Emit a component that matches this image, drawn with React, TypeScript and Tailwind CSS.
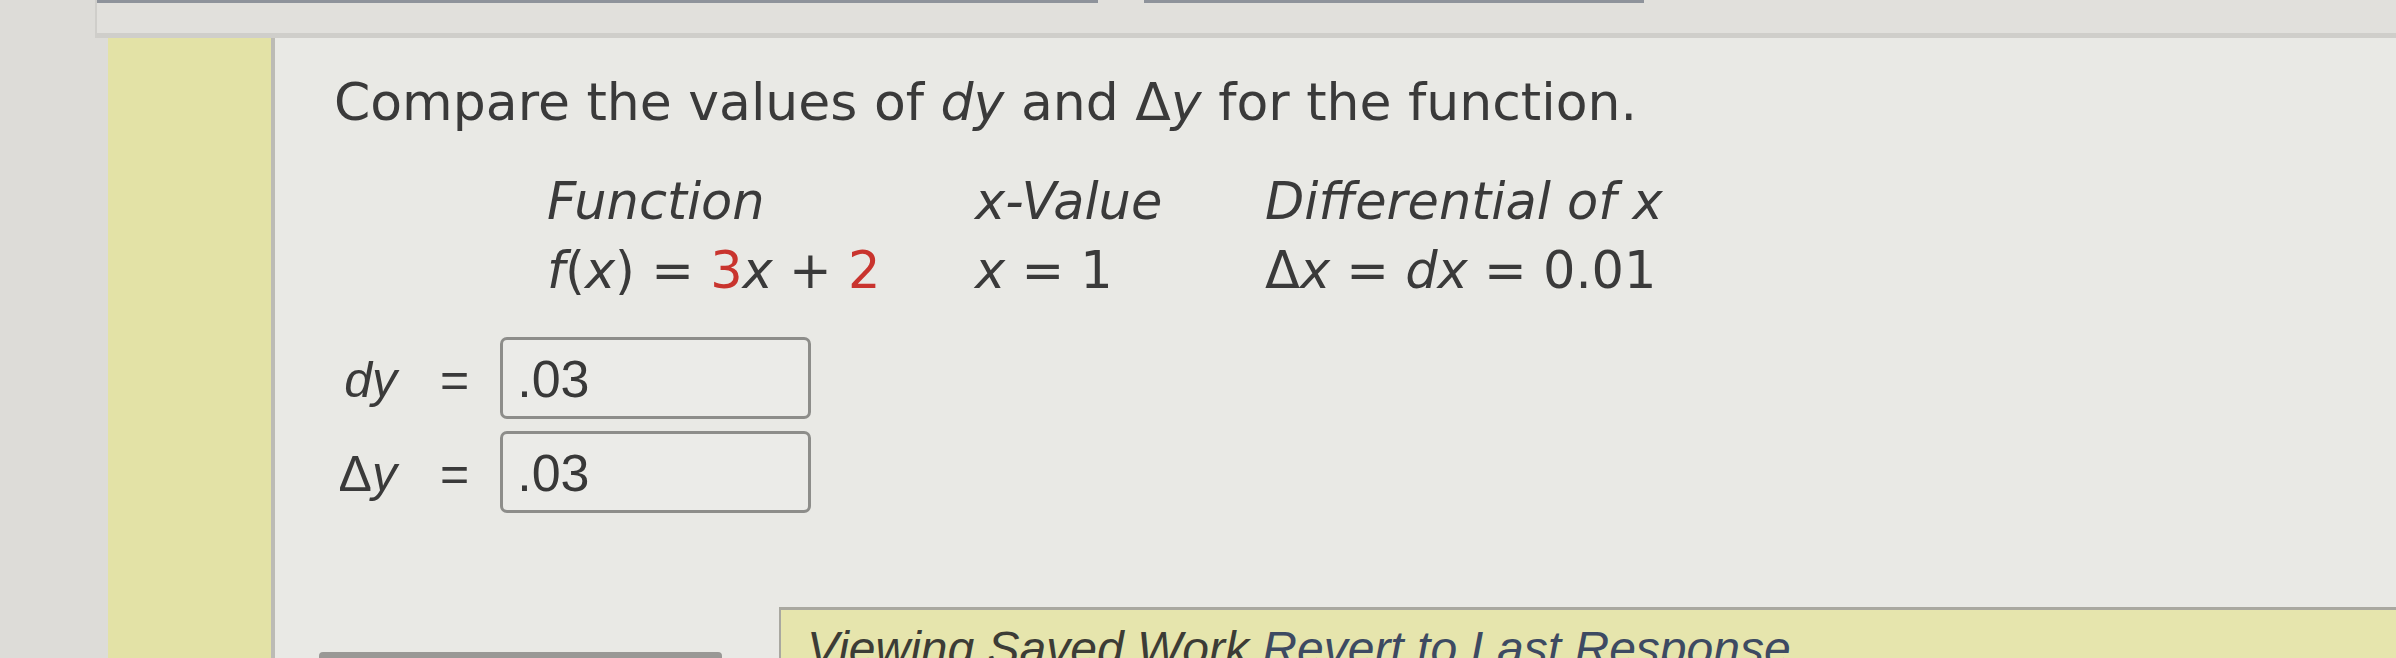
import React from "react";

const serif = "font-['DejaVu_Sans',sans-serif]";
const arial = "font-['Liberation_Sans',Arial,sans-serif]";

function AnswerRow({ label, value }: { label: React.ReactNode; value: string }) {
  return (
    <div className="flex h-[82px] items-start">
      <div className={`${arial} w-[70px] pt-[14px] text-right text-[50px] leading-[58px] text-[#3a3a3a]`}>
        {label}
      </div>
      <div className={`${arial} ml-[43px] pt-[14px] text-[50px] leading-[58px] text-[#3a3a3a]`}>=</div>
      <div className="ml-[31px] h-[82px] w-[311px] rounded-[7px] border-[3px] border-[#8d8d8a] bg-[#ebebe8] pl-[14px] pt-[10px]">
        <span className={`${arial} text-[52px] leading-[58px] text-[#383838]`}>{value}</span>
      </div>
    </div>
  );
}

export default function App() {
  return (
    <div className="flex h-[658px] w-[2396px] flex-col overflow-hidden bg-[#dddcd8]">
      {/* top strip, edge of the toolbar above */}
      <div className="flex h-[38px] shrink-0">
        <div className="w-[95px] shrink-0" />
        <div className="relative flex-1 border-b-[5px] border-l-2 border-[#cfceca] bg-[#e1e0dc]">
          <div className="absolute left-0 top-0 h-[3px] w-[1001px] bg-[#8e939b]" />
          <div className="absolute left-[1047px] top-0 h-[3px] w-[500px] bg-[#8e939b]" />
        </div>
      </div>

      <div className="flex flex-1">
        <div className="w-[108px] shrink-0" />
        {/* yellow side column */}
        <div className="w-[167px] shrink-0 border-r-[4px] border-[#bcbbb5] bg-[#e3e2a6]" />

        {/* question panel */}
        <div className="flex flex-1 flex-col bg-[#e9e9e5]">
          <p className={`${serif} ml-[59px] mt-[34px] text-[52px] leading-[60px] text-[#3a3a3a]`}>
            Compare the values of <i>dy</i> and Δ<i>y</i> for the function.
          </p>

          <div
            className={`${serif} ml-[272px] mt-[35px] grid grid-cols-[428px_290px_auto] text-[51px] leading-[69px] text-[#3a3a3a]`}
          >
            <i>Function</i>
            <i>x-Value</i>
            <i>Differential of x</i>
            <span>
              <i>f</i>(<i>x</i>) = <span className="text-[#c9342e]">3</span>
              <i>x</i> + <span className="text-[#c9342e]">2</span>
            </span>
            <span>
              <i>x</i> = 1
            </span>
            <span>
              Δ<i>x</i> = <i>dx</i> = 0.01
            </span>
          </div>

          <div className="ml-[52px] mt-[32px] flex flex-col gap-[12px]">
            <AnswerRow label={<i>dy</i>} value=".03" />
            <AnswerRow
              label={
                <span>
                  Δ<i>y</i>
                </span>
              }
              value=".03"
            />
          </div>

          {/* bottom: cut-off button and the saved-work notice */}
          <div className="mt-auto flex h-[56px] items-start overflow-hidden">
            <div className="ml-[44px] mt-[50px] h-[20px] w-[403px] shrink-0 rounded-t-[4px] bg-[#999895]" />
            <div className="ml-[57px] mt-[5px] h-[70px] flex-1 border-l-2 border-t-[3px] border-[#a9a8a0] bg-[#e6e5ad] pl-[26px] pt-[15px]">
              <span className={`${arial} text-[48px] italic leading-[48px]`}>
                <span className="text-[#3c3c36]">Viewing Saved Work</span>{" "}
                <span className="text-[#3d4a62]">Revert to Last Response</span>
              </span>
            </div>
          </div>
        </div>
      </div>
    </div>
  );
}
